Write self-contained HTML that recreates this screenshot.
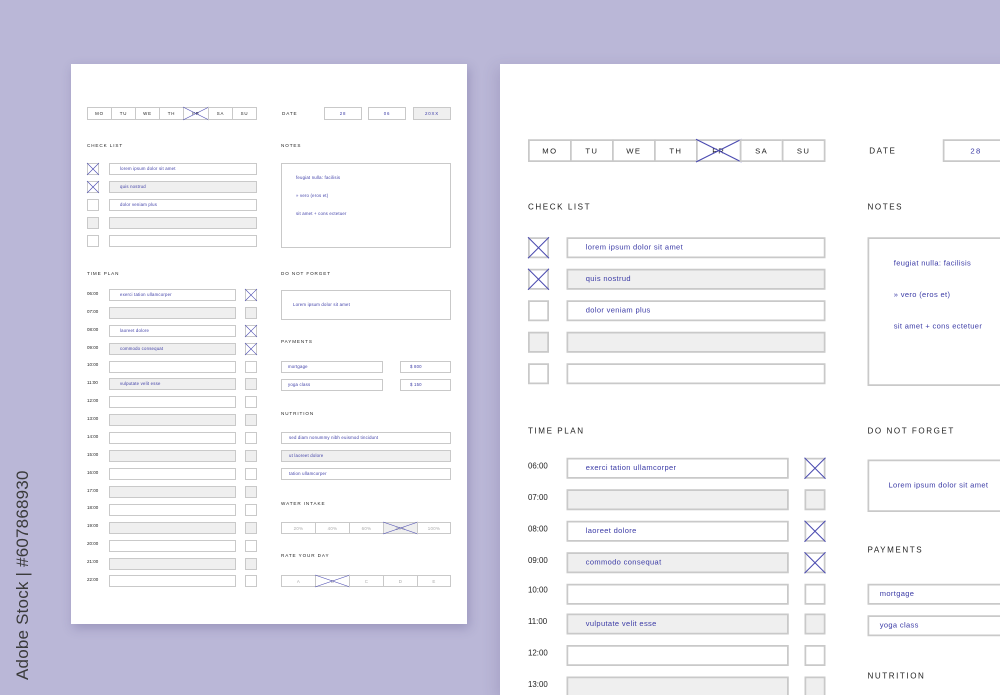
<!DOCTYPE html>
<html><head><meta charset="utf-8">
<style>
*{margin:0;padding:0;box-sizing:border-box}
html,body{width:1000px;height:695px;overflow:hidden;background:#bab7d7;font-family:"Liberation Sans",sans-serif}
#wrap{position:relative;width:1000px;height:695px;overflow:hidden}
.pg{position:absolute;width:396px;height:560px;background:#fff;overflow:hidden}
#p1{left:71px;top:64px;box-shadow:2px 4px 10px rgba(60,50,110,.25)}
#p2{left:500px;top:64px;height:362px;transform:scale(1.75);transform-origin:0 0;box-shadow:-2px 2px 8px rgba(60,50,110,.15)}
.b{position:absolute;border:0.6px solid #c9c9c9;background:#fff}
.g{background:#efefef}
.l{position:absolute;font-size:4.6px;letter-spacing:0.9px;color:#222;white-space:nowrap}
.h{position:absolute;font-size:4.3px;color:#3b3ba6;white-space:nowrap;font-family:"Liberation Sans",sans-serif;letter-spacing:0.2px}
.c{display:flex;align-items:center;justify-content:center;font-size:4.4px;letter-spacing:0.8px;color:#222}
.cl{color:#aaa;letter-spacing:0.3px}
svg.x{position:absolute;left:-1px;top:-1px;overflow:visible}
.t{position:absolute;font-size:4.5px;color:#222;left:16px}
#stk{position:absolute;left:13px;top:680px;transform:rotate(-90deg);transform-origin:0 0;font-size:17px;color:#3a3a3a;white-space:nowrap;letter-spacing:0.2px}
</style></head><body><div id="wrap">
<div id="stk">Adobe Stock | #607868930</div>

<div class="pg" id="p1">
<div class="b c" style="left:16px;top:43px;width:25px;height:13px">MO</div>
<div class="b c" style="left:40px;top:43px;width:25px;height:13px">TU</div>
<div class="b c" style="left:64px;top:43px;width:25px;height:13px">WE</div>
<div class="b c" style="left:88px;top:43px;width:25px;height:13px">TH</div>
<div class="b c" style="left:112px;top:43px;width:26px;height:13px">FR<svg class="x" width="26" height="13"><path d="M0 0L26 13M0 13L26 0" stroke="#4a4ab0" stroke-width=".6"/></svg></div>
<div class="b c" style="left:137px;top:43px;width:25px;height:13px">SA</div>
<div class="b c" style="left:161px;top:43px;width:25px;height:13px">SU</div>
<div class="l" style="left:211px;top:47px">DATE</div>
<div class="b c" style="left:253px;top:43px;width:38px;height:13px;color:#3b3ba6">28</div>
<div class="b c" style="left:297px;top:43px;width:38px;height:13px;color:#3b3ba6">06</div>
<div class="b g c" style="left:342px;top:43px;width:38px;height:13px;color:#3b3ba6">20XX</div>

<div class="l" style="left:16px;top:79px">CHECK LIST</div>
<div class="l" style="left:210px;top:79px">NOTES</div>
<div class="b" style="left:16px;top:99px;width:12px;height:12px"><svg class="x" width="12" height="12"><path d="M0 0L12 12M0 12L12 0" stroke="#4a4ab0" stroke-width=".6"/></svg></div>
<div class="b" style="left:38px;top:99px;width:148px;height:12px"></div><div class="h" style="left:49px;top:102px">lorem ipsum dolor sit amet</div>
<div class="b" style="left:16px;top:117px;width:12px;height:12px"><svg class="x" width="12" height="12"><path d="M0 0L12 12M0 12L12 0" stroke="#4a4ab0" stroke-width=".6"/></svg></div>
<div class="b g" style="left:38px;top:117px;width:148px;height:12px"></div><div class="h" style="left:49px;top:120px">quis nostrud</div>
<div class="b" style="left:16px;top:135px;width:12px;height:12px"></div>
<div class="b" style="left:38px;top:135px;width:148px;height:12px"></div><div class="h" style="left:49px;top:138px">dolor veniam plus</div>
<div class="b g" style="left:16px;top:153px;width:12px;height:12px"></div>
<div class="b g" style="left:38px;top:153px;width:148px;height:12px"></div>
<div class="b" style="left:16px;top:171px;width:12px;height:12px"></div>
<div class="b" style="left:38px;top:171px;width:148px;height:12px"></div>
<div class="b" style="left:210px;top:99px;width:170px;height:85px"></div>
<div class="h" style="left:225px;top:111px">feugiat nulla: facilisis</div>
<div class="h" style="left:225px;top:129px">» vero (eros et)</div>
<div class="h" style="left:225px;top:147px">sit amet + cons ectetuer</div>

<div class="l" style="left:16px;top:207px">TIME PLAN</div>
<div class="l" style="left:210px;top:207px">DO NOT FORGET</div>
<div class="t" style="top:227px">06:00</div><div class="b" style="left:38px;top:225px;width:127px;height:12px"></div><div class="h" style="left:49px;top:228px">exerci tation ullamcorper</div><div class="b" style="left:174px;top:225px;width:12px;height:12px"><svg class="x" width="12" height="12"><path d="M0 0L12 12M0 12L12 0" stroke="#4a4ab0" stroke-width=".6"/></svg></div>
<div class="t" style="top:245px">07:00</div><div class="b g" style="left:38px;top:243px;width:127px;height:12px"></div><div class="b g" style="left:174px;top:243px;width:12px;height:12px"></div>
<div class="t" style="top:263px">08:00</div><div class="b" style="left:38px;top:261px;width:127px;height:12px"></div><div class="h" style="left:49px;top:264px">laoreet dolore</div><div class="b" style="left:174px;top:261px;width:12px;height:12px"><svg class="x" width="12" height="12"><path d="M0 0L12 12M0 12L12 0" stroke="#4a4ab0" stroke-width=".6"/></svg></div>
<div class="t" style="top:281px">09:00</div><div class="b g" style="left:38px;top:279px;width:127px;height:12px"></div><div class="h" style="left:49px;top:282px">commodo consequat</div><div class="b" style="left:174px;top:279px;width:12px;height:12px"><svg class="x" width="12" height="12"><path d="M0 0L12 12M0 12L12 0" stroke="#4a4ab0" stroke-width=".6"/></svg></div>
<div class="t" style="top:298px">10:00</div><div class="b" style="left:38px;top:297px;width:127px;height:12px"></div><div class="b" style="left:174px;top:297px;width:12px;height:12px"></div>
<div class="t" style="top:316px">11:00</div><div class="b g" style="left:38px;top:314px;width:127px;height:12px"></div><div class="h" style="left:49px;top:317px">vulputate velit esse</div><div class="b g" style="left:174px;top:314px;width:12px;height:12px"></div>
<div class="t" style="top:334px">12:00</div><div class="b" style="left:38px;top:332px;width:127px;height:12px"></div><div class="b" style="left:174px;top:332px;width:12px;height:12px"></div>
<div class="t" style="top:352px">13:00</div><div class="b g" style="left:38px;top:350px;width:127px;height:12px"></div><div class="b g" style="left:174px;top:350px;width:12px;height:12px"></div>
<div class="t" style="top:370px">14:00</div><div class="b" style="left:38px;top:368px;width:127px;height:12px"></div><div class="b" style="left:174px;top:368px;width:12px;height:12px"></div>
<div class="t" style="top:388px">15:00</div><div class="b g" style="left:38px;top:386px;width:127px;height:12px"></div><div class="b g" style="left:174px;top:386px;width:12px;height:12px"></div>
<div class="t" style="top:406px">16:00</div><div class="b" style="left:38px;top:404px;width:127px;height:12px"></div><div class="b" style="left:174px;top:404px;width:12px;height:12px"></div>
<div class="t" style="top:424px">17:00</div><div class="b g" style="left:38px;top:422px;width:127px;height:12px"></div><div class="b g" style="left:174px;top:422px;width:12px;height:12px"></div>
<div class="t" style="top:441px">18:00</div><div class="b" style="left:38px;top:440px;width:127px;height:12px"></div><div class="b" style="left:174px;top:440px;width:12px;height:12px"></div>
<div class="t" style="top:459px">19:00</div><div class="b g" style="left:38px;top:458px;width:127px;height:12px"></div><div class="b g" style="left:174px;top:458px;width:12px;height:12px"></div>
<div class="t" style="top:477px">20:00</div><div class="b" style="left:38px;top:476px;width:127px;height:12px"></div><div class="b" style="left:174px;top:476px;width:12px;height:12px"></div>
<div class="t" style="top:495px">21:00</div><div class="b g" style="left:38px;top:494px;width:127px;height:12px"></div><div class="b g" style="left:174px;top:494px;width:12px;height:12px"></div>
<div class="t" style="top:513px">22:00</div><div class="b" style="left:38px;top:511px;width:127px;height:12px"></div><div class="b" style="left:174px;top:511px;width:12px;height:12px"></div>

<div class="b" style="left:210px;top:226px;width:170px;height:30px"></div>
<div class="h" style="left:222px;top:238px">Lorem ipsum dolor sit amet</div>
<div class="l" style="left:210px;top:275px">PAYMENTS</div>
<div class="b" style="left:210px;top:297px;width:102px;height:12px"></div><div class="h" style="left:217px;top:300px">mortgage</div>
<div class="b" style="left:329px;top:297px;width:51px;height:12px"></div><div class="h" style="left:339px;top:300px">$ 800</div>
<div class="b" style="left:210px;top:315px;width:102px;height:12px"></div><div class="h" style="left:217px;top:318px">yoga class</div>
<div class="b" style="left:329px;top:315px;width:51px;height:12px"></div><div class="h" style="left:339px;top:318px">$ 150</div>
<div class="l" style="left:210px;top:347px">NUTRITION</div>
<div class="b" style="left:210px;top:368px;width:170px;height:12px"></div><div class="h" style="left:218px;top:371px">sed diam nonummy nibh euismod tincidunt</div>
<div class="b g" style="left:210px;top:386px;width:170px;height:12px"></div><div class="h" style="left:218px;top:389px">ut laoreet dolore</div>
<div class="b" style="left:210px;top:404px;width:170px;height:12px"></div><div class="h" style="left:218px;top:407px">tation ullamcorper</div>
<div class="l" style="left:210px;top:437px">WATER INTAKE</div>
<div class="b c cl" style="left:210px;top:458px;width:35px;height:12px">20%</div>
<div class="b c cl" style="left:244px;top:458px;width:35px;height:12px">40%</div>
<div class="b c cl" style="left:278px;top:458px;width:35px;height:12px">60%</div>
<div class="b g c cl" style="left:312px;top:458px;width:35px;height:12px">80%<svg class="x" width="35" height="12"><path d="M0 0L35 12M0 12L35 0" stroke="#4a4ab0" stroke-width=".6"/></svg></div>
<div class="b c cl" style="left:346px;top:458px;width:34px;height:12px">100%</div>
<div class="l" style="left:210px;top:489px">RATE YOUR DAY</div>
<div class="b c cl" style="left:210px;top:511px;width:35px;height:12px">A</div>
<div class="b c cl" style="left:244px;top:511px;width:35px;height:12px">B<svg class="x" width="35" height="12"><path d="M0 0L35 12M0 12L35 0" stroke="#4a4ab0" stroke-width=".6"/></svg></div>
<div class="b c cl" style="left:278px;top:511px;width:35px;height:12px">C</div>
<div class="b c cl" style="left:312px;top:511px;width:35px;height:12px">D</div>
<div class="b c cl" style="left:346px;top:511px;width:34px;height:12px">E</div>
</div>

<div class="pg" id="p2">
<div class="b c" style="left:16px;top:43px;width:25px;height:13px">MO</div>
<div class="b c" style="left:40px;top:43px;width:25px;height:13px">TU</div>
<div class="b c" style="left:64px;top:43px;width:25px;height:13px">WE</div>
<div class="b c" style="left:88px;top:43px;width:25px;height:13px">TH</div>
<div class="b c" style="left:112px;top:43px;width:26px;height:13px">FR<svg class="x" width="26" height="13"><path d="M0 0L26 13M0 13L26 0" stroke="#4a4ab0" stroke-width=".6"/></svg></div>
<div class="b c" style="left:137px;top:43px;width:25px;height:13px">SA</div>
<div class="b c" style="left:161px;top:43px;width:25px;height:13px">SU</div>
<div class="l" style="left:211px;top:47px">DATE</div>
<div class="b c" style="left:253px;top:43px;width:38px;height:13px;color:#3b3ba6">28</div>
<div class="b c" style="left:297px;top:43px;width:38px;height:13px;color:#3b3ba6">06</div>
<div class="b g c" style="left:342px;top:43px;width:38px;height:13px;color:#3b3ba6">20XX</div>
<div class="l" style="left:16px;top:79px">CHECK LIST</div>
<div class="l" style="left:210px;top:79px">NOTES</div>
<div class="b" style="left:16px;top:99px;width:12px;height:12px"><svg class="x" width="12" height="12"><path d="M0 0L12 12M0 12L12 0" stroke="#4a4ab0" stroke-width=".6"/></svg></div>
<div class="b" style="left:38px;top:99px;width:148px;height:12px"></div><div class="h" style="left:49px;top:102px">lorem ipsum dolor sit amet</div>
<div class="b" style="left:16px;top:117px;width:12px;height:12px"><svg class="x" width="12" height="12"><path d="M0 0L12 12M0 12L12 0" stroke="#4a4ab0" stroke-width=".6"/></svg></div>
<div class="b g" style="left:38px;top:117px;width:148px;height:12px"></div><div class="h" style="left:49px;top:120px">quis nostrud</div>
<div class="b" style="left:16px;top:135px;width:12px;height:12px"></div>
<div class="b" style="left:38px;top:135px;width:148px;height:12px"></div><div class="h" style="left:49px;top:138px">dolor veniam plus</div>
<div class="b g" style="left:16px;top:153px;width:12px;height:12px"></div>
<div class="b g" style="left:38px;top:153px;width:148px;height:12px"></div>
<div class="b" style="left:16px;top:171px;width:12px;height:12px"></div>
<div class="b" style="left:38px;top:171px;width:148px;height:12px"></div>
<div class="b" style="left:210px;top:99px;width:170px;height:85px"></div>
<div class="h" style="left:225px;top:111px">feugiat nulla: facilisis</div>
<div class="h" style="left:225px;top:129px">» vero (eros et)</div>
<div class="h" style="left:225px;top:147px">sit amet + cons ectetuer</div>
<div class="l" style="left:16px;top:207px">TIME PLAN</div>
<div class="l" style="left:210px;top:207px">DO NOT FORGET</div>
<div class="t" style="top:227px">06:00</div><div class="b" style="left:38px;top:225px;width:127px;height:12px"></div><div class="h" style="left:49px;top:228px">exerci tation ullamcorper</div><div class="b" style="left:174px;top:225px;width:12px;height:12px"><svg class="x" width="12" height="12"><path d="M0 0L12 12M0 12L12 0" stroke="#4a4ab0" stroke-width=".6"/></svg></div>
<div class="t" style="top:245px">07:00</div><div class="b g" style="left:38px;top:243px;width:127px;height:12px"></div><div class="b g" style="left:174px;top:243px;width:12px;height:12px"></div>
<div class="t" style="top:263px">08:00</div><div class="b" style="left:38px;top:261px;width:127px;height:12px"></div><div class="h" style="left:49px;top:264px">laoreet dolore</div><div class="b" style="left:174px;top:261px;width:12px;height:12px"><svg class="x" width="12" height="12"><path d="M0 0L12 12M0 12L12 0" stroke="#4a4ab0" stroke-width=".6"/></svg></div>
<div class="t" style="top:281px">09:00</div><div class="b g" style="left:38px;top:279px;width:127px;height:12px"></div><div class="h" style="left:49px;top:282px">commodo consequat</div><div class="b" style="left:174px;top:279px;width:12px;height:12px"><svg class="x" width="12" height="12"><path d="M0 0L12 12M0 12L12 0" stroke="#4a4ab0" stroke-width=".6"/></svg></div>
<div class="t" style="top:298px">10:00</div><div class="b" style="left:38px;top:297px;width:127px;height:12px"></div><div class="b" style="left:174px;top:297px;width:12px;height:12px"></div>
<div class="t" style="top:316px">11:00</div><div class="b g" style="left:38px;top:314px;width:127px;height:12px"></div><div class="h" style="left:49px;top:317px">vulputate velit esse</div><div class="b g" style="left:174px;top:314px;width:12px;height:12px"></div>
<div class="t" style="top:334px">12:00</div><div class="b" style="left:38px;top:332px;width:127px;height:12px"></div><div class="b" style="left:174px;top:332px;width:12px;height:12px"></div>
<div class="t" style="top:352px">13:00</div><div class="b g" style="left:38px;top:350px;width:127px;height:12px"></div><div class="b g" style="left:174px;top:350px;width:12px;height:12px"></div>
<div class="b" style="left:210px;top:226px;width:170px;height:30px"></div>
<div class="h" style="left:222px;top:238px">Lorem ipsum dolor sit amet</div>
<div class="l" style="left:210px;top:275px">PAYMENTS</div>
<div class="b" style="left:210px;top:297px;width:102px;height:12px"></div><div class="h" style="left:217px;top:300px">mortgage</div>
<div class="b" style="left:210px;top:315px;width:102px;height:12px"></div><div class="h" style="left:217px;top:318px">yoga class</div>
<div class="l" style="left:210px;top:347px">NUTRITION</div>
</div>
</div></body></html>
